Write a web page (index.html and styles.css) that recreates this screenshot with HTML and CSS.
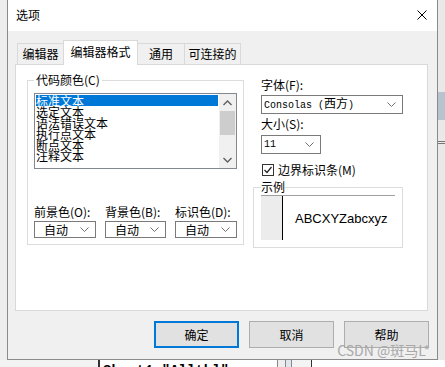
FILE: index.html
```html
<!DOCTYPE html>
<html lang="zh-CN">
  <head>
    <meta charset="UTF-8" />
    <meta name="viewport" content="width=device-width, initial-scale=1.0" />
    <title>选项</title>
    <link rel="stylesheet" href="styles.css">
  </head>
  <body>
    <div class="top">
      <div class="dialog">
        <div class="titlebar">
          <span class="title">选项</span>
          <svg class="close" width="10" height="10" viewBox="0 0 10 10">
            <path d="M0.5 0.5 L9.5 9.5 M9.5 0.5 L0.5 9.5" stroke="#000" stroke-width="1" fill="none" />
          </svg>
        </div>

        <div class="dialog-body">
          <div class="tabs">
            <div class="tab t1">编辑器</div>
            <div class="tab t2 active">编辑器格式</div>
            <div class="tab t3">通用</div>
            <div class="tab t4">可连接的</div>
          </div>

          <div class="panel">
            <fieldset class="group colors">
              <legend>代码颜色(C)</legend>
              <div class="listbox">
                <ul class="items">
                  <li class="selected">标准文本</li>
                  <li>选定文本</li>
                  <li>语法错误文本</li>
                  <li>执行点文本</li>
                  <li>断点文本</li>
                  <li>注释文本</li>
                </ul>
                <div class="scrollbar">
                  <div class="arrow">
                    <svg width="9" height="6" viewBox="0 0 9 6">
                      <path d="M0.5 5 L4.5 1 L8.5 5" stroke="#606060" stroke-width="1.4" fill="none" />
                    </svg>
                  </div>
                  <div class="track"><div class="thumb"></div></div>
                  <div class="arrow">
                    <svg width="9" height="6" viewBox="0 0 9 6">
                      <path d="M0.5 1 L4.5 5 L8.5 1" stroke="#606060" stroke-width="1.4" fill="none" />
                    </svg>
                  </div>
                </div>
              </div>

              <div class="pickers">
                <div class="picker">
                  <label>前景色(O):</label>
                  <div class="combo small">
                    <span>自动</span>
                    <svg width="9" height="5" viewBox="0 0 9 5"><path d="M0.5 0.5 L4.5 4.5 L8.5 0.5" stroke="#707070" fill="none" /></svg>
                  </div>
                </div>
                <div class="picker">
                  <label>背景色(B):</label>
                  <div class="combo small">
                    <span>自动</span>
                    <svg width="9" height="5" viewBox="0 0 9 5"><path d="M0.5 0.5 L4.5 4.5 L8.5 0.5" stroke="#707070" fill="none" /></svg>
                  </div>
                </div>
                <div class="picker">
                  <label>标识色(D):</label>
                  <div class="combo small">
                    <span>自动</span>
                    <svg width="9" height="5" viewBox="0 0 9 5"><path d="M0.5 0.5 L4.5 4.5 L8.5 0.5" stroke="#707070" fill="none" /></svg>
                  </div>
                </div>
              </div>
            </fieldset>

            <div class="font-col">
              <label class="field-label">字体(F):</label>
              <div class="combo font-combo">
                <span><span class="mono">Consolas (</span>西方<span class="mono">)</span></span>
                <svg width="9" height="5" viewBox="0 0 9 5"><path d="M0.5 0.5 L4.5 4.5 L8.5 0.5" stroke="#707070" fill="none" /></svg>
              </div>

              <label class="field-label size-label">大小(S):</label>
              <div class="combo size-combo">
                <span class="mono">11</span>
                <svg width="9" height="5" viewBox="0 0 9 5"><path d="M0.5 0.5 L4.5 4.5 L8.5 0.5" stroke="#707070" fill="none" /></svg>
              </div>

              <div class="check-row">
                <svg width="12" height="12" viewBox="0 0 12 12">
                  <rect x="0.5" y="0.5" width="11" height="11" fill="#fff" stroke="#333" />
                  <path d="M2.5 6 L5 8.5 L9.5 3" stroke="#222" stroke-width="1.2" fill="none" />
                </svg>
                <span>边界标识条(M)</span>
              </div>

              <fieldset class="group sample">
                <legend>示例</legend>
                <div class="sample-box">
                  <div class="gutter"></div>
                  <div class="sample-text">ABCXYZabcxyz</div>
                </div>
              </fieldset>
            </div>
          </div>

          <div class="buttons">
            <div class="btn default">确定</div>
            <div class="btn">取消</div>
            <div class="btn">帮助</div>
          </div>
        </div>

        <div class="watermark">CSDN @斑马L*</div>
      </div>

      <div class="side">
        <div class="side-box"></div>
        <div class="side-line"></div>
      </div>
    </div>

    <div class="sheet">
      <div class="sheet-left"></div>
      <div class="sheet-name">Sheet1 "Alltbl"</div>
      <div class="sheet-gap"></div>
      <div class="sheet-mark"></div>
      <div class="sheet-cell"></div>
      <div class="sheet-rest"></div>
    </div>
  </body>
</html>
```

FILE: styles.css
```css
body {
  margin: 0;
  width: 445px;
  height: 367px;
  overflow: hidden;
  background-color: #ededed;
  font-family: "Noto Sans CJK SC", sans-serif;
  font-size: 12px;
  line-height: 14px;
  color: #000;
}

.top {
  display: flex;
  height: 360px;
}

/* dialog frame */
.dialog {
  position: relative;
  margin-left: 7px;
  width: 429px;
  height: 359px;
  border: 1px solid #8a8a8a;
  border-top: none;
  background-color: #f0f0f0;
  display: flex;
  flex-direction: column;
}

.titlebar {
  height: 31px;
  background-color: #fff;
  display: flex;
  align-items: center;
  justify-content: space-between;
  padding: 0 10px 2px 8px;
  box-sizing: border-box;
}

.dialog-body {
  flex: 1;
  padding: 9px 9px 0 7px;
  display: flex;
  flex-direction: column;
}

/* tabs */
.tabs {
  display: flex;
  align-items: flex-end;
  height: 24px;
  margin-left: 2px;
}

.tab {
  height: 21px;
  box-sizing: border-box;
  border: 1px solid #d9d9d9;
  border-bottom: none;
  border-right: none;
  background-color: #f0f0f0;
  text-align: center;
  line-height: 20px;
}

.tab.t1 { width: 46px; }
.tab.t2 { width: 75px; }
.tab.t3 { width: 47px; }
.tab.t4 { width: 57px; border-right: 1px solid #d9d9d9; }

.tab.active {
  height: 25px;
  background-color: #fff;
  border-right: 1px solid #d9d9d9;
  margin-bottom: -1px;
  margin-right: -1px;
  line-height: 22px;
  position: relative;
  z-index: 1;
}

.tab.active + .tab {
  border-left: none;
  padding-left: 1px;
}

.panel {
  height: 247px;
  box-sizing: border-box;
  border: 1px solid #d9d9d9;
  background-color: #fff;
  display: flex;
  gap: 9px;
  padding: 8px 0 0 11px;
}

/* group boxes */
.group {
  margin: 0;
  border: 1px solid #dcdcdc;
  box-sizing: border-box;
}

.group legend {
  padding: 0 2px;
  line-height: 14px;
}

.colors {
  width: 217px;
  padding: 6px 6px 6px 6px;
  align-self: flex-start;
}

.listbox {
  display: flex;
  height: 76px;
  box-sizing: border-box;
  border: 1px solid #828790;
}

.items {
  flex: 1;
  margin: 0;
  padding: 1px 1px 0 1px;
  list-style: none;
  overflow: hidden;
}

/* rows are packed tighter than the glyphs, as in the original list */
.items li {
  height: 11px;
  line-height: 11px;
  white-space: nowrap;
}

.items li.selected {
  background-color: #0078d7;
  color: #fff;
}

.scrollbar {
  width: 17px;
  background-color: #f0f0f0;
  display: flex;
  flex-direction: column;
}

.arrow {
  height: 17px;
  display: flex;
  align-items: center;
  justify-content: center;
}

.track {
  flex: 1;
}

.thumb {
  height: 24px;
  margin: 0 1px;
  background-color: #cdcdcd;
}

.pickers {
  display: grid;
  grid-template-columns: 62px 61px 62px;
  column-gap: 9px;
  margin-top: 36px;
}

.picker label {
  display: block;
  white-space: nowrap;
  margin-bottom: 2px;
}

.combo {
  box-sizing: border-box;
  border: 1px solid #7a7a7a;
  background-color: #fff;
  display: flex;
  align-items: center;
  justify-content: space-between;
}

.combo.small {
  height: 17px;
  padding: 0 6px 0 9px;
}

/* font column */
.font-col {
  width: 150px;
  display: flex;
  flex-direction: column;
  padding-top: 5px;
}

.field-label {
  margin-left: 8px;
}

.mono {
  font-family: "Liberation Mono", monospace;
  font-size: 10px;
}

.font-combo {
  margin: 3px 0 0 8px;
  width: 142px;
  height: 19px;
  padding: 0 6px 0 2px;
}

.size-label {
  margin-top: 3px;
}

.size-combo {
  margin: 4px 0 0 8px;
  width: 60px;
  height: 19px;
  padding: 0 6px 0 2px;
}

.check-row {
  display: flex;
  align-items: center;
  gap: 4px;
  margin: 9px 0 0 9px;
}

.sample {
  margin-top: 3px;
  padding: 1px 7px 7px 7px;
}

.sample legend {
  padding: 0;
}

.sample-box {
  display: flex;
  height: 44px;
  border-top: 1px solid #a0a0a0;
}

.gutter {
  width: 21px;
  background-color: #ececec;
  border-right: 1px solid #000;
}

.sample-text {
  display: flex;
  align-items: center;
  padding: 2px 0 0 12px;
  font-family: "Liberation Sans", Arial, sans-serif;
  font-size: 13px;
}

/* buttons */
.buttons {
  display: flex;
  justify-content: flex-end;
  gap: 10px;
  margin: 10px -1px 0 0;
}

.btn {
  width: 85px;
  height: 27px;
  box-sizing: border-box;
  border: 1px solid #adadad;
  background-color: #e1e1e1;
  display: flex;
  align-items: center;
  justify-content: center;
}

.btn.default {
  border: 2px solid #0078d7;
}

.watermark {
  position: absolute;
  right: 7px;
  bottom: 0;
  font-size: 14px;
  line-height: 17px;
  color: #a8a8a8;
}

/* window behind the dialog */
.side {
  width: 7px;
  background-color: #e9e9e9;
}

.side-box {
  margin-top: 92px;
  height: 28px;
  background-color: #b7c3cf;
}

.side-line {
  margin-top: 21px;
  height: 1px;
  border-top: 1px solid #777;
  border-bottom: 1px solid #777;
}

.sheet {
  display: flex;
  height: 7px;
  overflow: hidden;
}

.sheet-left {
  width: 98px;
  background-color: #f3f3f3;
}

.sheet-name {
  width: 174px;
  border-left: 2px solid #333;
  border-right: 1px solid #888;
  background-color: #fff;
  padding: 4px 0 0 3px;
  font-family: "Liberation Mono", monospace;
  font-weight: bold;
  font-size: 14px;
  line-height: 14px;
  white-space: nowrap;
  overflow: hidden;
}

.sheet-gap {
  width: 7px;
  background-color: #eee;
  border-right: 1px solid #888;
}

.sheet-mark {
  width: 5px;
  background-color: #dfe6ee;
  border-right: 1px solid #888;
}

.sheet-cell {
  width: 19px;
  background-color: #f4f4f4;
  border-right: 1px solid #333;
}

.sheet-rest {
  flex: 1;
  background-color: #fff;
}
```
